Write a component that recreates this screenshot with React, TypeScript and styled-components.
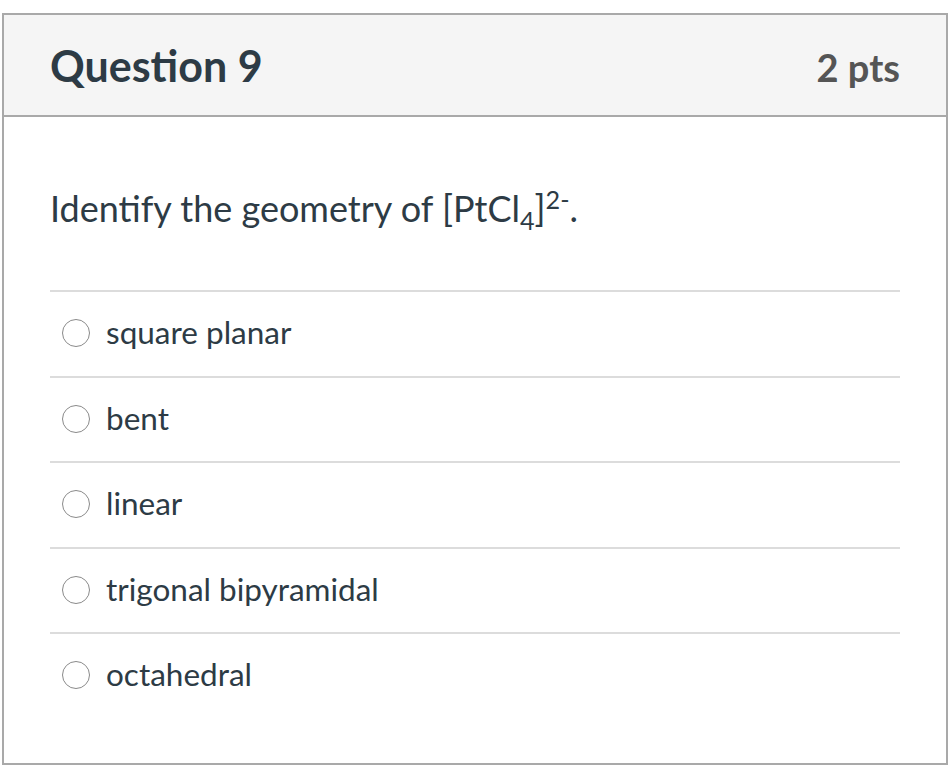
import React from "react";
import styled, { createGlobalStyle } from "styled-components";

const Global = createGlobalStyle`
  html, body { margin: 0; padding: 0; background: #ffffff; }
  body { font-family: Lato, "Open Sans", sans-serif; }
  * { box-sizing: border-box; }
`;

const Card = styled.section`
  margin: 13px 0 0 2px;
  width: 946px;
  height: 752px;
  border: 2px solid #a9a9a9;
  background: #ffffff;
  display: flex;
  flex-direction: column;
`;

const Header = styled.header`
  height: 102px;
  background: #f5f5f5;
  border-bottom: 2px solid #a9a9a9;
  display: flex;
  align-items: center;
  justify-content: space-between;
  padding: 0 46px 0 46px;
`;

const Title = styled.h2`
  margin: 0;
  font-family: Lato, sans-serif;
  font-weight: 700;
  font-size: 43px;
  color: #2d3b45;
`;

const Points = styled.div`
  font-family: Lato, sans-serif;
  font-weight: 700;
  font-size: 38px;
  color: #555555;
  margin-top: 4px;
`;

const Body = styled.div`
  padding: 0 46px;
`;

const Prompt = styled.p`
  margin: 69px 0 0 0;
  font-size: 36px;
  line-height: 44px;
  color: #2d3b45;
  sub, sup { font-size: 0.7em; line-height: 0; }
`;

const AnswerList = styled.div`
  margin-top: 60px;
  display: flex;
  flex-direction: column;
`;

const Answer = styled.label`
  display: flex;
  align-items: center;
  height: 85.5px;
  border-top: 2px solid #dcdcdc;
  padding: 0 0 3px 12px;
  gap: 16px;
  font-size: 31.5px;
  color: #2d3b45;
`;

const Radio = styled.span`
  width: 28px;
  height: 28px;
  border-radius: 50%;
  border: 1.5px solid #8a8a8a;
  background: #ffffff;
  flex: none;
  margin-top: 2px;
`;

const answers = ["square planar", "bent", "linear", "trigonal bipyramidal", "octahedral"];

export default function App() {
  return (
    <>
      <Global />
      <Card>
        <Header>
          <Title>Question 9</Title>
          <Points>2 pts</Points>
        </Header>
        <Body>
          <Prompt>
            Identify the geometry of [PtCl<sub>4</sub>]<sup>2-</sup>.
          </Prompt>
          <AnswerList>
            {answers.map((a) => (
              <Answer key={a}>
                <Radio />
                {a}
              </Answer>
            ))}
          </AnswerList>
        </Body>
      </Card>
    </>
  );
}
